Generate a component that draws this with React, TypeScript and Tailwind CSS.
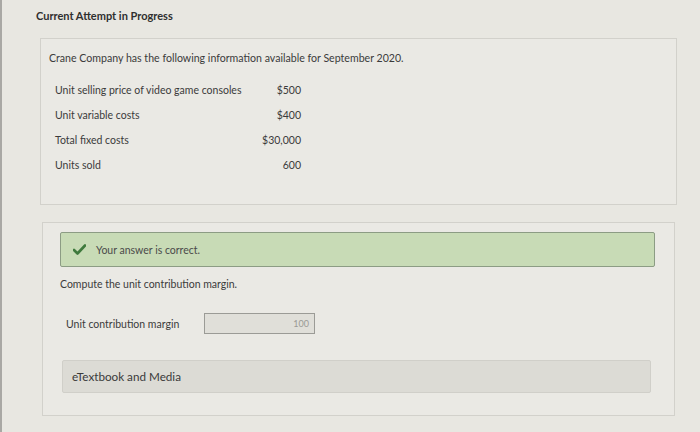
import React from "react";

const rows: [string, string][] = [
  ["Unit selling price of video game consoles", "$500"],
  ["Unit variable costs", "$400"],
  ["Total fixed costs", "$30,000"],
  ["Units sold", "600"],
];

export default function App() {
  return (
    <div
      className="w-[700px] h-[432px] overflow-hidden bg-[#e8e7e1] border-l-2 border-[#a9a8a4] text-[#3b3b3b]"
      style={{ fontFamily: "Lato, 'Open Sans', sans-serif" }}
    >
      <div className="pt-[9px] pl-[34px] text-[11px] font-bold leading-[14px] text-[#2f2f2f]">
        Current Attempt in Progress
      </div>

      <div className="mt-[15px] ml-[38px] w-[637px] h-[167px] border border-[#d2d1cb] bg-[#eae9e4] pt-[12px] pl-[8px]">
        <div className="text-[10.6px] leading-[14px]">
          Crane Company has the following information available for September 2020.
        </div>
        <div className="mt-[18px] ml-[6px] w-[246px] flex flex-col gap-[11px]">
          {rows.map(([l, v]) => (
            <div key={l} className="flex justify-between text-[10.5px] leading-[14px]">
              <span>{l}</span>
              <span>{v}</span>
            </div>
          ))}
        </div>
      </div>

      <div className="mt-[17px] ml-[40px] w-[633px] h-[194px] border border-[#d2d1cb] bg-[#eae9e4] pt-[9px] pl-[17px]">
        <div className="w-[595px] h-[35px] bg-[#c8dbb6] border border-[#8c9c84] rounded-[2px] flex items-center pl-[12px]">
          <svg width="13" height="11" viewBox="0 0 13 11" className="mr-[10px]">
            <path d="M1 6 L4.5 9.5 L12 1.5" fill="none" stroke="#3f7a3d" strokeWidth="2.6" strokeLinecap="round" strokeLinejoin="round" />
          </svg>
          <span className="text-[10.5px] leading-[14px] text-[#4a4a4a]">Your answer is correct.</span>
        </div>
        <div className="mt-[10px] text-[10.5px] leading-[14px]">Compute the unit contribution margin.</div>
        <div className="mt-[22px] ml-[6px] flex items-center">
          <span className="w-[138px] text-[10.5px] leading-[14px]">Unit contribution margin</span>
          <div className="w-[111px] h-[21px] border border-[#9b9b96] bg-[#e0dfd9] flex items-center justify-end pr-[5px] text-[9px] text-[#9a9a95]">
            100
          </div>
        </div>
        <div className="mt-[26px] ml-[2px] w-[589px] h-[33px] bg-[#dcdbd5] border border-[#d0cfc9] rounded-[2px] flex items-center pl-[9px] text-[11.7px] text-[#3a3a3a]">
          eTextbook and Media
        </div>
      </div>
    </div>
  );
}
